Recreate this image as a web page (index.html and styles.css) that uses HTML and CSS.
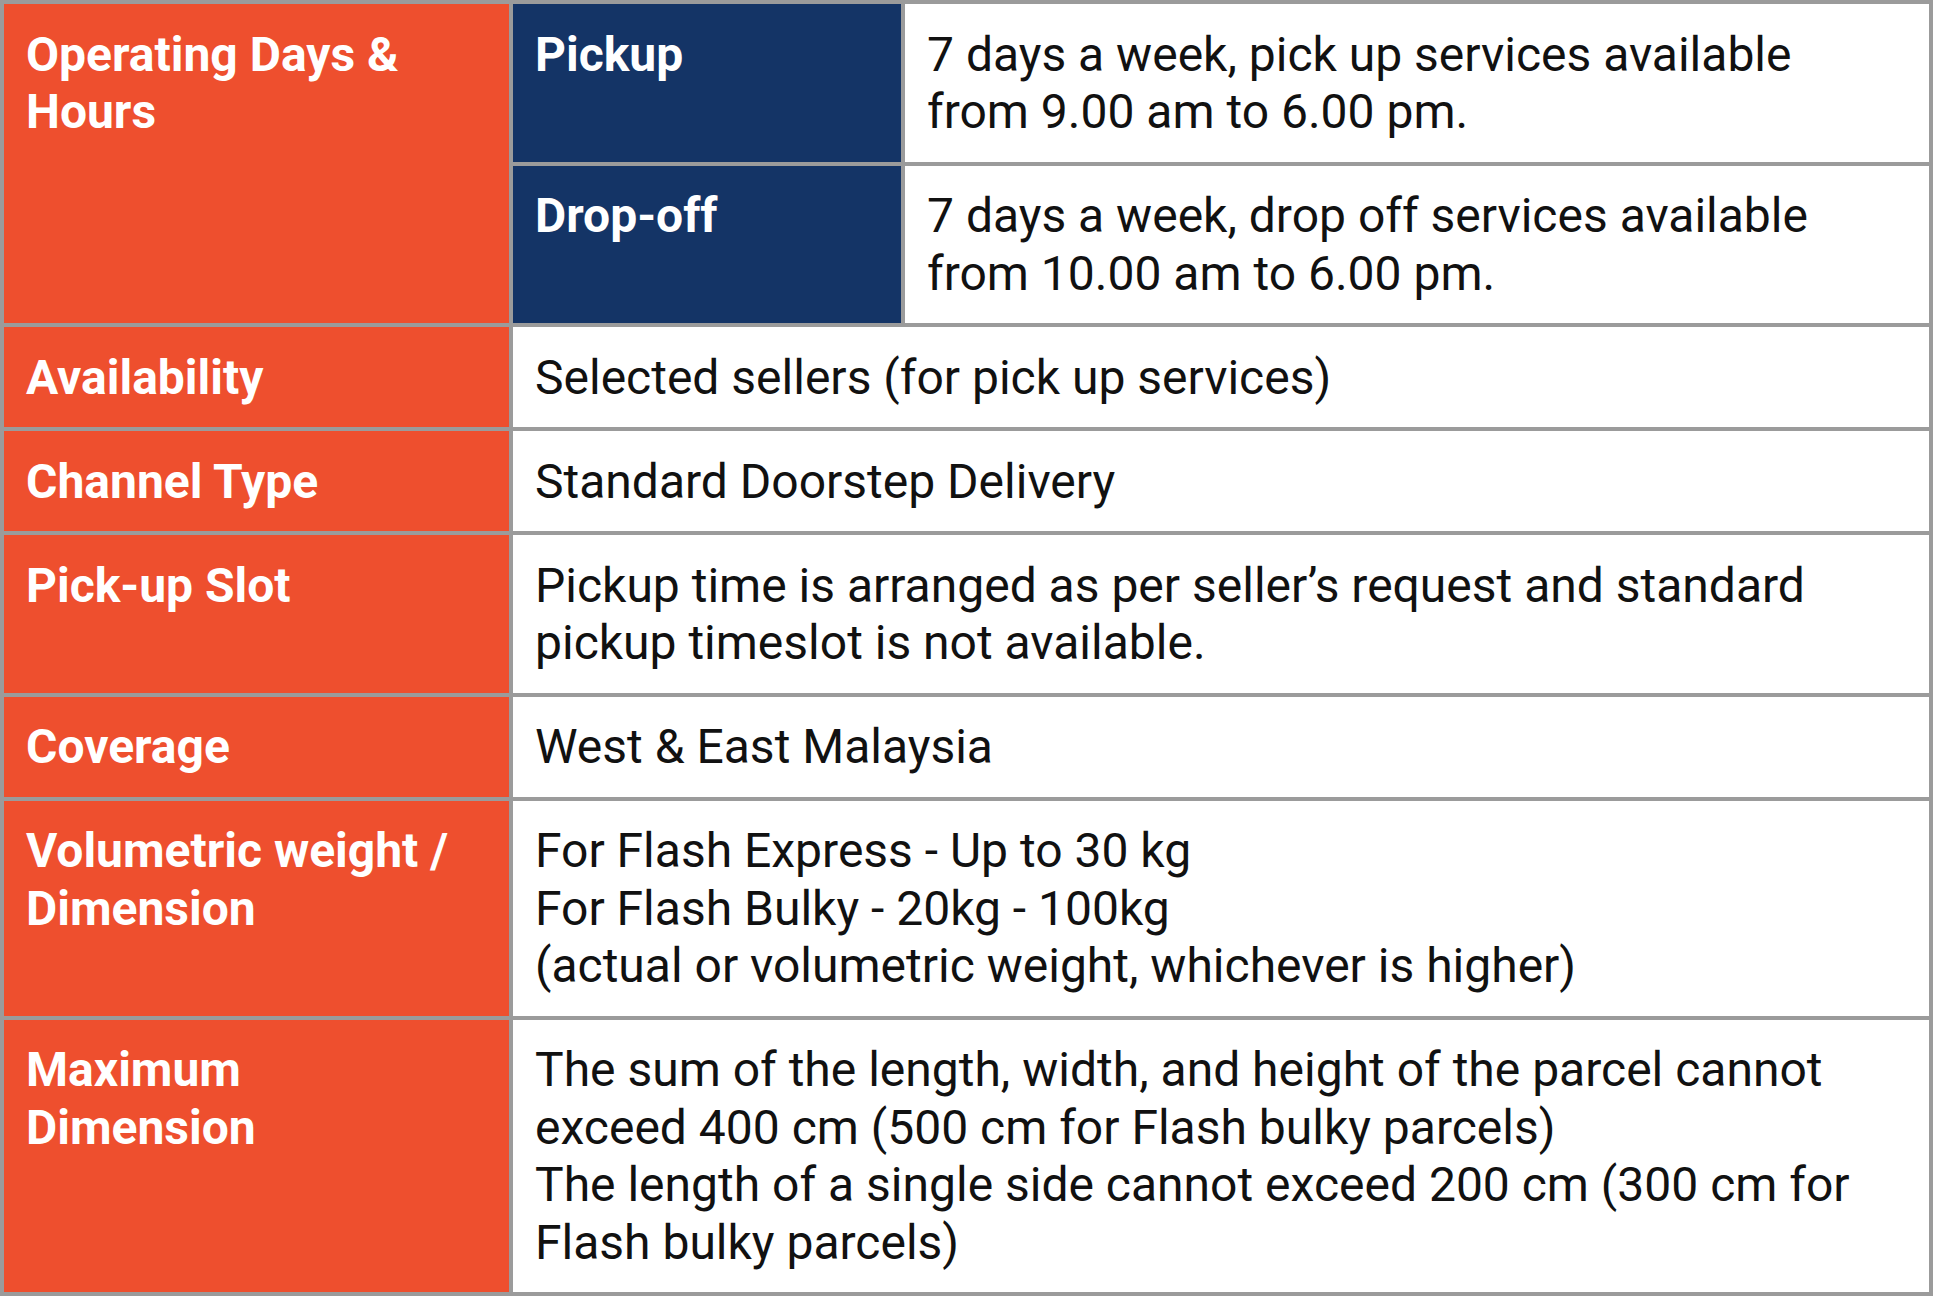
FILE: index.html
```html
<!DOCTYPE html>
<html lang="en">
<head>
<meta charset="utf-8">
<title>Service Details</title>
<link rel="stylesheet" href="styles.css">
</head>
<body>
<div class="table">
  <div class="label span2">Operating Days &amp; Hours</div>
  <div class="sub">Pickup</div>
  <div class="value">7 days a week, pick up services available<br>from 9.00 am to 6.00 pm.</div>
  <div class="sub">Drop-off</div>
  <div class="value">7 days a week, drop off services available<br>from 10.00 am to 6.00 pm.</div>

  <div class="label">Availability</div>
  <div class="value wide">Selected sellers (for pick up services)</div>

  <div class="label">Channel Type</div>
  <div class="value wide">Standard Doorstep Delivery</div>

  <div class="label">Pick-up Slot</div>
  <div class="value wide">Pickup time is arranged as per seller’s request and standard pickup timeslot is not available.</div>

  <div class="label">Coverage</div>
  <div class="value wide">West &amp; East Malaysia</div>

  <div class="label">Volumetric weight / Dimension</div>
  <div class="value wide">For Flash Express - Up to 30 kg<br>For Flash Bulky - 20kg - 100kg<br>(actual or volumetric weight, whichever is higher)</div>

  <div class="label">Maximum Dimension</div>
  <div class="value wide">The sum of the length, width, and height of the parcel cannot exceed 400 cm (500 cm for Flash bulky parcels)<br>The length of a single side cannot exceed 200 cm (300 cm for Flash bulky parcels)</div>
</div>
</body>
</html>
```

FILE: styles.css
```css
html, body {
  margin: 0;
  padding: 0;
  background: #ffffff;
}

body {
  font-family: Roboto, "Liberation Sans", sans-serif;
  font-size: 48px;
  line-height: 57.5px;
}

.table {
  display: grid;
  grid-template-columns: 505px 388px 1024px;
  gap: 4px;
  padding: 4px;
  width: 1925px;
  background: #9b9b9b;
}

.table > div {
  padding: 21.5px 22px 21px 22px;
}

.table > .label {
  grid-column: 1;
  background: #ee4f2e;
  color: #ffffff;
  font-weight: 700;
  padding-right: 50px;
}

.span2 {
  grid-row: span 2;
}

.sub {
  grid-column: 2;
  background: #143466;
  color: #ffffff;
  font-weight: 700;
}

.value {
  background: #ffffff;
  color: #111111;
}

.wide {
  grid-column: 2 / span 2;
}
```
